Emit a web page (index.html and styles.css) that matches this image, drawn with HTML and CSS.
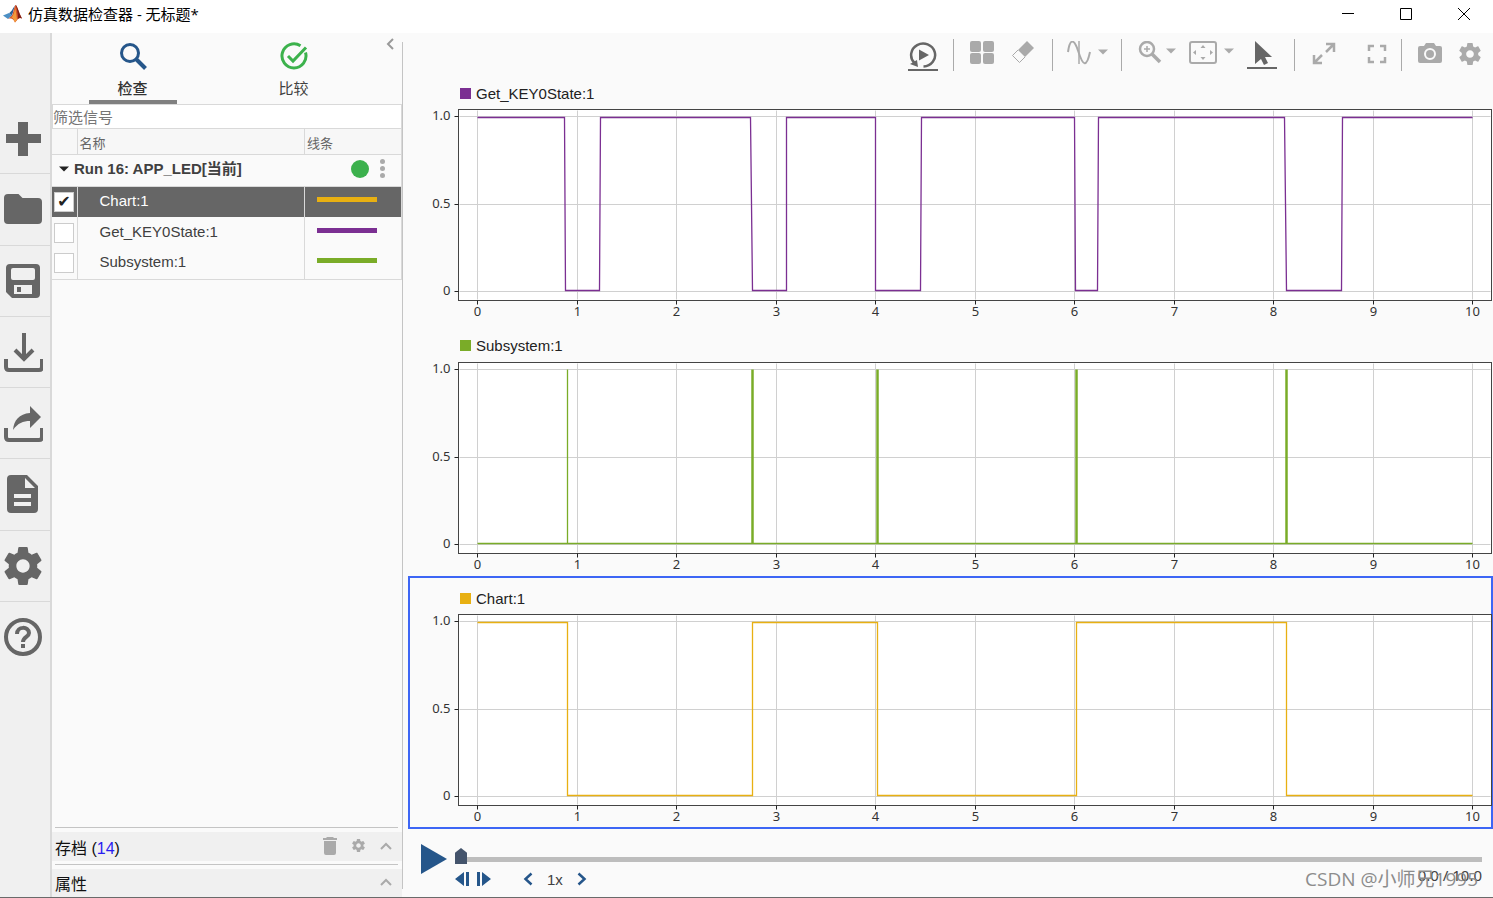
FILE: index.html
```html
<!DOCTYPE html>
<html lang="zh-CN">
<head>
  <meta charset="UTF-8">
  <title>仿真数据检查器 - 无标题*</title>
  <link rel="stylesheet" href="styles.css">
</head>
<body>
  <!-- shared symbols -->
  <svg class="defs" aria-hidden="true">
    <symbol id="i-gear" viewBox="2 2 20 20">
      <path d="M19.43 12.98c.04-.32.07-.64.07-.98s-.03-.66-.07-.98l2.11-1.65c.19-.15.24-.42.12-.64l-2-3.46c-.12-.22-.39-.3-.61-.22l-2.49 1c-.52-.4-1.08-.73-1.69-.98l-.38-2.65C14.46 2.18 14.25 2 14 2h-4c-.25 0-.46.18-.49.42l-.38 2.65c-.61.25-1.17.59-1.69.98l-2.49-1c-.23-.09-.49 0-.61.22l-2 3.46c-.13.22-.07.49.12.64l2.11 1.65c-.04.32-.07.65-.07.98s.03.66.07.98l-2.11 1.65c-.19.15-.24.42-.12.64l2 3.46c.12.22.39.3.61.22l2.49-1c.52.4 1.08.73 1.69.98l.38 2.65c.03.24.24.42.49.42h4c.25 0 .46-.18.49-.42l.38-2.65c.61-.25 1.17-.59 1.69-.98l2.49 1c.23.09.49 0 .61-.22l2-3.46c.12-.22.07-.49-.12-.64l-2.11-1.65zM12 15.5c-1.93 0-3.5-1.57-3.5-3.5s1.57-3.5 3.5-3.5 3.5 1.57 3.5 3.5-1.57 3.5-3.5 3.5z"/>
    </symbol>
    <symbol id="i-caret" viewBox="0 0 10 6"><path d="M0 0.500h10L5 5.500z"/></symbol>
    <symbol id="i-up" viewBox="0 0 12 8"><path d="M1 7l5-5 5 5" fill="none" stroke="#aaa" stroke-width="2"/></symbol>
  </svg>

  <header class="titlebar">
    <svg class="logo" viewBox="0 0 20 18">
      <path d="M0 10.500L6 8l3 2.500L5 14z" fill="#4b8fc4"/>
      <path d="M6 8c2-.5 3.500-4 6-7.500L9 10.500z" fill="#2c5f95"/>
      <path d="M5 14l4-3.500C10.500 8 11 2 12.500 0c1.500 0 3 7 6.500 13.500-3-1.500-4 .5-7 4C11 15 9 12.500 5 14z" fill="#d8532a"/>
      <path d="M12.500 0c1.500 0 3 7 6.500 13.500-2-1-3-.5-4 .5C15 9 14 3 12.500 0z" fill="#7e1f16"/>
      <path d="M8.500 12.500c2 .5 2.500 3 3.500 5 1-1.500 1.500-2 2-3-.5-4-1-8-1.800-12-.6 4-1.700 8-3.700 10z" fill="#f29a3a"/>
    </svg>
    <h1>仿真数据检查器 - 无标题*</h1>
    <div class="window-buttons">
      <button aria-label="最小化"><svg viewBox="0 0 12 12"><path d="M0 5.500h12"/></svg></button>
      <button aria-label="最大化"><svg viewBox="0 0 12 12"><path d="M.5.5h11v11H.5z"/></svg></button>
      <button aria-label="关闭"><svg viewBox="0 0 12 12"><path d="M0 0l12 12M12 0L0 12"/></svg></button>
    </div>
  </header>

  <div class="workspace">
    <nav class="rail">
      <div class="rail-items">
        <button aria-label="新建"><svg viewBox="0 0 40 40"><path d="M15 4h10v12h13v9H25v13H15V25H3v-9h12z"/></svg></button>
        <button aria-label="打开"><svg viewBox="0 0 40 40"><path d="M5 5h10.500l4 4H35a4 4 0 0 1 4 4v18a4 4 0 0 1-4 4H5a4 4 0 0 1-4-4V9a4 4 0 0 1 4-4z"/></svg></button>
        <button aria-label="保存"><svg viewBox="0 0 40 40"><path fill-rule="evenodd" d="M7 3h26a4 4 0 0 1 4 4v26a4 4 0 0 1-4 4H9l-6-6V7a4 4 0 0 1 4-4zM10 7q-2 0-2 2v8q0 2 2 2h20q2 0 2-2V9q0-2-2-2zM11 24v9h18v-9zM14 26h4v5h-4z"/></svg></button>
        <button aria-label="导入"><svg viewBox="0 0 40 40"><path d="M3 27v8q0 3 3 3h30q3 0 3-3v-8M21 1v25M12 18l9 9 9-9" class="line"/></svg></button>
        <button aria-label="导出"><svg viewBox="0 0 40 40"><path d="M3 25v9q0 3 3 3h30q3 0 3-3v-9" class="line"/><path d="M10 27c1-10 6-16 17-17V3l11 11-11 11v-7c-7 0-12 2-17 9z"/></svg></button>
        <button aria-label="报告"><svg viewBox="0 0 40 40"><path fill-rule="evenodd" d="M8 1h16l11 11v23a4 4 0 0 1-4 4H8a4 4 0 0 1-4-4V5a4 4 0 0 1 4-4zM22 4v10h10zM11 20v4h17v-4zM11 28v4h17v-4z"/></svg></button>
        <button aria-label="设置"><svg viewBox="0 0 40 40"><use href="#i-gear" x="1" y="1" width="38" height="38"/></svg></button>
        <button aria-label="帮助"><svg viewBox="0 0 40 40"><circle cx="20" cy="20" r="17" fill="none" stroke="#666" stroke-width="4"/><path d="M14 17c0-8 12-8 12-1 0 4-6 4-6 9" fill="none" stroke="#666" stroke-width="4"/><path d="M18 27h4v4h-4z"/></svg></button>
      </div>
    </nav>

    <aside class="sidebar">
      <div class="tabs">
        <button class="tab active">
          <svg viewBox="0 0 28 28"><circle cx="11" cy="11" r="8.500" fill="none" stroke="#25568a" stroke-width="3"/><path d="M17 17l9.500 9.500" stroke="#25568a" stroke-width="4"/></svg>
          <span>检查</span>
        </button>
        <button class="tab">
          <svg viewBox="0 0 28 28" fill="none" stroke="#3cb24c" stroke-width="3"><path d="M25.500 10.500A12 12 0 1 1 20.500 3.800"/><path d="M8 14l5 5L26 5.500"/></svg>
          <span>比较</span>
        </button>
        <button class="collapse" aria-label="折叠"><svg viewBox="0 0 8 12"><path d="M7 1L2 6l5 5" fill="none" stroke="#999" stroke-width="2"/></svg></button>
      </div>

      <input class="filter" type="text" placeholder="筛选信号" aria-label="筛选信号">

      <table class="signals">
        <thead>
          <tr><th class="col-check"></th><th>名称</th><th class="col-line">线条</th></tr>
        </thead>
        <tbody>
          <tr class="run">
            <td colspan="3">
              <div class="run-row">
                <svg class="expander" viewBox="0 0 10 6"><use href="#i-caret" width="10" height="6"/></svg>
                <span>Run 16: APP_LED[当前]</span>
                <i class="status"></i>
                <button class="more" aria-label="更多"><i></i><i></i><i></i></button>
              </div>
            </td>
          </tr>
          <tr class="selected">
            <td><input type="checkbox" id="sig1" checked></td>
            <td><label for="sig1">Chart:1</label></td>
            <td><i class="line-sample yellow"></i></td>
          </tr>
          <tr>
            <td><input type="checkbox" id="sig2"></td>
            <td><label for="sig2">Get_KEY0State:1</label></td>
            <td><i class="line-sample purple"></i></td>
          </tr>
          <tr>
            <td><input type="checkbox" id="sig3"></td>
            <td><label for="sig3">Subsystem:1</label></td>
            <td><i class="line-sample green"></i></td>
          </tr>
        </tbody>
      </table>

      <div class="drawers">
        <div class="drawer">
          <span class="drawer-title">存档 (<b>14</b>)</span>
          <button aria-label="删除"><svg width="14" height="18" viewBox="0 0 14 18"><path d="M4 0h6l1 1h3v2H0V1h3zM1 4h12v12q0 2-2 2H3q-2 0-2-2z"/></svg></button>
          <button aria-label="存档设置"><svg width="13" height="13"><use href="#i-gear"/></svg></button>
          <button aria-label="展开存档"><svg width="12" height="8"><use href="#i-up"/></svg></button>
        </div>
        <div class="drawer">
          <span class="drawer-title">属性</span>
          <button aria-label="展开属性"><svg width="12" height="8"><use href="#i-up"/></svg></button>
        </div>
      </div>
    </aside>

    <div class="divider"></div>

    <main class="main">
      <div class="toolbar">
        <div class="group replay">
          <button class="on" aria-label="回放"><svg width="30" height="28" viewBox="0 0 30 28"><path d="M15.500 25.500A12 11.500 0 1 0 6.500 22" fill="none" stroke="#666" stroke-width="2.500"/><path d="M11 8.500l10 5.500-10 5.500zM2 23l7-4 1 7z"/></svg></button>
        </div>
        <div class="group layout">
          <button aria-label="布局"><svg width="24" height="24" viewBox="0 0 24 24"><rect width="11" height="11" rx="2" x="0" y="0"/><rect x="13" y="0" width="11" height="11" rx="2"/><rect y="12" width="11" height="11" rx="2"/><rect x="13" y="12" width="11" height="11" rx="2"/></svg></button>
          <button aria-label="清除"><svg width="24" height="24" viewBox="0 0 24 24"><path d="M16 0l7 7-9 9-7-7z"/><path d="M7 9l-5.500 5.500 7 7L14 16" fill="none" stroke="#aaa"/></svg></button>
        </div>
        <div class="group cursors">
          <button class="menu wide" aria-label="游标"><svg width="24" height="26" viewBox="0 0 24 26"><path d="M1 11C3-3 7-3 11.500 11s8 16 11.500 0" fill="none" stroke="#aaa" stroke-width="2"/><path d="M12 0v23" stroke="#aaa" stroke-width="1.500"/></svg><svg class="caret"><use href="#i-caret"/></svg></button>
        </div>
        <div class="group view">
          <button class="menu" aria-label="缩放"><svg width="24" height="24" viewBox="0 0 24 24"><circle cx="9" cy="8" r="7" fill="none" stroke="#aaa" stroke-width="2.500"/><path d="M14 13l8 8" stroke="#aaa" stroke-width="3.500"/><path d="M9 5v6M6 8h6" stroke="#aaa" stroke-width="1.500"/></svg><svg class="caret"><use href="#i-caret"/></svg></button>
          <button class="menu wide" aria-label="适应视图"><svg width="28" height="24" viewBox="0 0 28 24"><rect x="1" y="1" width="26" height="21" rx="2" fill="none" stroke="#aaa" stroke-width="2"/><path d="M14 4l2.500 3h-5zM14 19l2.500-3h-5zM4 11.500l3-2.500v5zM24 11.500L21 9v5z"/></svg><svg class="caret"><use href="#i-caret"/></svg></button>
          <button class="on pointer" aria-label="选择"><svg width="30" height="26" viewBox="0 0 30 26"><path d="M8 0l17 16h-7l3 6-4 2-3-6-6 5z"/></svg></button>
        </div>
        <div class="group loose">
          <button aria-label="展开"><svg width="24" height="24" viewBox="0 0 24 24"><path d="M14 3h8v8M21 4l-7 7M10 22H2v-8M3 21l7-7" fill="none" stroke="#aaa" stroke-width="2.500"/></svg></button>
          <button aria-label="全屏"><svg width="24" height="24" viewBox="0 0 24 24"><path d="M4 10V5h5M15 5h5v5M20 16v5h-5M9 21H4v-5" fill="none" stroke="#aaa" stroke-width="2.500"/></svg></button>
        </div>
        <div class="group">
          <button aria-label="快照"><svg width="24" height="24" viewBox="0 0 24 24"><path fill-rule="evenodd" d="M8 2h8l2 3h4q2 0 2 2v13q0 2-2 2H2q-2 0-2-2V7q0-2 2-2h4zM12 7a6 6 0 1 0 0 12 6 6 0 0 0 0-12z"/><circle cx="12" cy="13" r="4"/></svg></button>
          <button aria-label="首选项"><svg width="24" height="24" viewBox="0 0 24 24"><use href="#i-gear" x="1" y="2" width="22" height="22"/></svg></button>
        </div>
      </div>

      <div class="plots">
        <section class="plot">
          <h2><i class="swatch purple"></i>Get_KEY0State:1</h2>
          <svg class="chart" data-signal="key"></svg>
        </section>
        <section class="plot">
          <h2><i class="swatch green"></i>Subsystem:1</h2>
          <svg class="chart" data-signal="subsystem"></svg>
        </section>
        <section class="plot active">
          <h2><i class="swatch yellow"></i>Chart:1</h2>
          <svg class="chart" data-signal="chart"></svg>
        </section>
      </div>

      <footer class="player">
        <button class="play" aria-label="播放"><svg width="26" height="30" viewBox="0 0 26 30"><path d="M0 0l26 15L0 30z"/></svg></button>
        <div class="player-body">
          <input type="range" min="0" max="10" step="0.1" value="0" aria-label="时间">
          <div class="player-row">
            <button aria-label="后退一步"><svg width="14" height="16" viewBox="0 0 14 16"><path d="M0 8l9-7v14zM11 1h3v14h-3z"/></svg></button>
            <button aria-label="前进一步"><svg width="14" height="16" viewBox="0 0 14 16"><path d="M14 8L5 1v14zM0 1h3v14H0z"/></svg></button>
            <div class="speed">
              <button aria-label="减速"><svg width="10" height="14" viewBox="0 0 10 14"><path d="M8.500 1.500L2.500 7l6 5.500" class="chev"/></svg></button>
              <span>1x</span>
              <button aria-label="加速"><svg width="10" height="14" viewBox="0 0 10 14"><path d="M1.500 1.500L7.500 7l-6 5.500" class="chev"/></svg></button>
            </div>
            <span class="time">0.0 / 10.0</span>
          </div>
        </div>
      </footer>
    </main>
  </div>

  <div class="watermark">CSDN @小师兄1995</div>

  <script src="charts.js"></script>
</body>
</html>
```
FILE: styles.css
```css
* {
  box-sizing: border-box;
}

body {
  margin: 0;
  height: 100vh;
  display: flex;
  flex-direction: column;
  overflow: hidden;
  position: relative;
  background: #fafafa;
  border-bottom: 1px solid #6a6a6a;
  font-family: "Liberation Sans", "Noto Sans CJK SC", sans-serif;
  font-size: 15px;
  color: #404040;
}

button {
  display: flex;
  align-items: center;
  justify-content: center;
  padding: 0;
  border: none;
  background: none;
  color: inherit;
  font: inherit;
  cursor: pointer;
}

svg {
  display: block;
}

.defs {
  position: absolute;
  width: 0;
  height: 0;
}

.purple { background: #7b2f92; }
.green { background: #7aac28; }
.yellow { background: #e8b012; }

/* title bar */
.titlebar {
  display: flex;
  align-items: center;
  height: 33px;
  padding: 0 6px 6px 3px;
  background: #fff;
}

.logo {
  width: 20px;
  height: 18px;
}

.titlebar h1 {
  flex: 1;
  margin: 0 0 0 5px;
  font-family: "Open Sans", "Noto Sans CJK SC", sans-serif;
  font-size: 15px;
  font-weight: normal;
  line-height: 20px;
  color: #000;
}

.window-buttons {
  display: flex;
}

.window-buttons button {
  width: 46px;
  height: 28px;
  margin-left: 12px;
}

.window-buttons svg {
  width: 12px;
  height: 12px;
  fill: none;
  stroke: #000;
}

.workspace {
  flex: 1;
  display: flex;
  min-height: 0;
}

/* left icon rail */
.rail {
  flex: none;
  width: 52px;
  padding-top: 70px;
  background: #f0f0f0;
  border-right: 2px solid #d9d9d9;
}

.rail-items {
  display: grid;
  grid-template-rows: repeat(8, 1fr);
  height: 570px;
}

.rail button {
  padding-right: 5px;
  border-bottom: 1px solid #d9d9d9;
}

.rail button:last-child {
  border-bottom: none;
}

.rail svg {
  width: 40px;
  height: 40px;
  fill: #666;
}

.rail .line {
  fill: none;
  stroke: #666;
  stroke-width: 4;
}

/* sidebar */
.sidebar {
  flex: none;
  width: 350px;
  display: flex;
  flex-direction: column;
}

.tabs {
  display: flex;
  height: 71px;
}

.tab {
  flex: 1;
  flex-direction: column;
  justify-content: flex-start;
  padding-top: 9px;
}

.tab svg {
  width: 28px;
  height: 28px;
}

.tab span {
  width: 88px;
  height: 28px;
  margin-top: 6px;
  line-height: 25px;
}

.tab.active span {
  border-bottom: 4px solid #808080;
  font-weight: 500;
  color: #333;
}

.collapse {
  width: 28px;
  height: 22px;
  padding-left: 4px;
}

.collapse svg {
  width: 8px;
  height: 12px;
}

.filter {
  height: 25px;
  padding: 1px 0 0;
  border: 1px solid #d9d9d9;
  background: #fff;
  font: inherit;
}

.filter::placeholder {
  color: #757575;
}

.signals {
  width: 100%;
  table-layout: fixed;
  border-collapse: collapse;
  border-right: 1px solid #d9d9d9;
  border-bottom: 1px solid #d9d9d9;
}

.signals th {
  height: 25px;
  padding: 2px 2px 0;
  border-right: 1px solid #d9d9d9;
  border-bottom: 1px solid #d9d9d9;
  background: #f7f7f7;
  text-align: left;
  font-size: 13px;
  font-weight: normal;
  color: #666;
}

.col-check { width: 25px; }
.col-line { width: 97px; }

.signals td {
  height: 31px;
  padding: 0;
  border-right: 1px solid #d9d9d9;
}

.signals .run td {
  border-bottom: 1px solid #d9d9d9;
}

.run-row {
  display: flex;
  align-items: center;
  height: 31px;
  padding: 0 16px 3px 7px;
  font-weight: bold;
}

.run-row span {
  flex: 1;
  padding-bottom: 3px;
}

.expander {
  width: 10px;
  height: 6px;
  margin-right: 5px;
  fill: #222;
}

.status {
  width: 18px;
  height: 18px;
  border-radius: 50%;
  background: #3cb14d;
}

.more {
  flex-direction: column;
  gap: 2px;
  margin-left: 11px;
}

.more i {
  width: 5px;
  height: 5px;
  border-radius: 50%;
  background: #aaa;
}

.signals input {
  display: block;
  appearance: none;
  width: 20px;
  height: 20px;
  margin: 0 2px;
  border: 1px solid #ccc;
  background: #fff;
}

.signals input:checked::before {
  content: "✔";
  display: block;
  line-height: 18px;
  text-align: center;
  font-family: "DejaVu Sans", sans-serif;
  font-size: 16px;
  color: #222;
}

.signals label {
  display: block;
  padding: 0 0 3px 22px;
}

.selected {
  background: #666;
  color: #fff;
  font-weight: 500;
}

.line-sample {
  display: block;
  width: 60px;
  height: 5px;
  margin: 0 0 5px 12px;
}

.drawers {
  margin-top: auto;
}

.drawer {
  display: flex;
  align-items: center;
  height: 29px;
  padding: 0 10px 0 3px;
  background: #f0f0f0;
  font-size: 16px;
  color: #111;
  position: relative;
  margin-top: 8px;
}

.drawer:last-child {
  height: 28px;
}

.drawer::before {
  content: "";
  position: absolute;
  top: -5px;
  left: 3px;
  right: 4px;
  border-top: 1px solid #c4c4c4;
}

.drawer-title {
  flex: 1;
}

.drawer b {
  font-weight: normal;
  color: #2a1cf0;
}

.drawer button {
  margin-left: 15px;
  padding-bottom: 2px;
}

.drawer svg {
  fill: #aaa;
}

.divider {
  flex: none;
  width: 1px;
  margin: 9px 0 8px;
  background: #c4c4c4;
}

/* toolbar */
.main {
  flex: 1;
  min-width: 0;
  display: flex;
  flex-direction: column;
}

.toolbar {
  display: flex;
  justify-content: flex-end;
  height: 38px;
  padding: 6px 11px 0 0;
}

.group {
  display: flex;
  align-items: flex-start;
  gap: 16px;
  height: 32px;
  padding: 0 16px;
  border-left: 1px solid #aaa;
}

.group:last-child {
  padding-right: 0;
}

.group.replay {
  border-left: none;
  padding-right: 15px;
}

.group.layout {
  gap: 17px;
  padding-right: 17px;
}

.group.cursors {
  padding: 0 13px 0 14px;
}

.group.view {
  gap: 13px;
  padding-right: 17px;
}

.group.loose {
  gap: 29px;
  padding: 0 12px 0 17px;
}

.group svg {
  fill: #aaa;
}

.group button {
  padding-top: 2px;
}

.group .menu {
  gap: 4px;
}

.group .menu.wide {
  gap: 7px;
}

.group .caret {
  width: 10px;
  height: 6px;
  margin-bottom: 4px;
}

.group .on {
  border-bottom: 2px solid #666;
}

.group .on svg {
  fill: #666;
}

/* plots */
.plots {
  flex: 1;
  min-height: 0;
  display: flex;
  flex-direction: column;
  margin-left: 5px;
}

.plot {
  flex: 1;
  min-height: 0;
  display: flex;
  flex-direction: column;
  border: 2px solid transparent;
}

.plot.active {
  border-color: #3d66f5;
}

.plot h2 {
  display: flex;
  align-items: center;
  height: 36px;
  margin: 0;
  padding: 4px 0 0 50px;
  font-size: 15px;
  font-weight: normal;
  color: #222;
}

.swatch {
  width: 11px;
  height: 11px;
  margin-right: 5px;
}

.chart {
  flex: 1;
  min-height: 0;
  width: 100%;
  overflow: visible;
}

.chart text {
  font-family: "Noto Sans", sans-serif;
  font-size: 13px;
  fill: #333;
}

.chart .area { fill: #fff; stroke: #444; }
.chart .grid { stroke: #d0d0d0; }
.chart .tick { stroke: #222; }
.chart .trace { fill: none; }

/* playback */
.player {
  display: flex;
  gap: 8px;
  height: 68px;
  padding: 15px 11px 0 18px;
}

.play {
  align-self: flex-start;
}

.player svg {
  fill: #25568a;
}

.player-body {
  flex: 1;
  padding-top: 4px;
}

.player input {
  display: block;
  appearance: none;
  width: 100%;
  height: 23px;
  margin: 0;
  background: none;
}

.player input::-webkit-slider-runnable-track {
  height: 5px;
  background: linear-gradient(to right, transparent 6px, #bdbdbd 6px);
}

.player input::-webkit-slider-thumb {
  appearance: none;
  width: 12px;
  height: 16px;
  margin-top: -9px;
  background: #44546c;
  clip-path: polygon(50% 0, 100% 30%, 100% 100%, 0 100%, 0 30%);
}

.player-row {
  display: flex;
  align-items: center;
  gap: 8px;
  height: 16px;
}

.speed {
  display: flex;
  align-items: center;
  gap: 14px;
  margin-left: 24px;
}

.chev {
  fill: none;
  stroke: #25568a;
  stroke-width: 2.5;
}

.time {
  margin-left: auto;
  padding-bottom: 8px;
  font-family: "Noto Sans", sans-serif;
  font-size: 15px;
}

.watermark {
  position: absolute;
  right: 15px;
  bottom: 5px;
  font-family: "Open Sans", "Noto Sans CJK SC", sans-serif;
  font-size: 19px;
  line-height: 26px;
  color: #8c8c8c;
  pointer-events: none;
}
```
FILE: charts.js
```js
const signals = {
  key: {
    color: '#7b2f92',
    points: [[0, 1], [0.87, 1], [0.885, 0], [1.225, 0], [1.24, 1], [2.74, 1], [2.76, 0], [3.105, 0], [3.11, 1],
      [3.995, 1], [4.005, 0], [4.45, 0], [4.46, 1], [6, 1], [6.01, 0], [6.235, 0], [6.245, 1],
      [8.11, 1], [8.135, 0], [8.68, 0], [8.69, 1], [10, 1]]
  },
  subsystem: {
    color: '#7aac28',
    pulses: [[0.9, 1.3], [2.765, 2.5], [4.025, 2.5], [6.025, 2.5], [8.135, 2.5]]
  },
  chart: {
    color: '#e8b012',
    points: [[0, 1], [0.9, 1], [0.9, 0], [2.76, 0], [2.76, 1], [4.02, 1], [4.02, 0],
      [6.02, 0], [6.02, 1], [8.13, 1], [8.13, 0], [10, 0]]
  }
};

function drawChart(svg) {
  const signal = signals[svg.dataset.signal];
  const width = svg.clientWidth;
  const height = svg.clientHeight;
  const left = 48.5;
  // the plot area runs up to the panel's border
  const right = width + 0.5;
  const top = 0.5;
  const bottom = Math.floor(height) - 21.5;
  const snap = v => Math.floor(v) + 0.5;
  const x = t => left + 19 + t / 10 * (right - left - 38);
  const y = v => bottom - 9 - v * (bottom - top - 16);
  // traces sit just inside the outer grid lines
  const ty = v => snap(v ? y(1) + 1 : y(0) - 1);

  let html = `<rect class="area" x="${left}" y="${top}" width="${right - left}" height="${bottom - top}"/>`;

  for (let t = 0; t <= 10; t++) {
    const px = snap(x(t));
    html += `<path class="grid" d="M${px} ${top + 1}V${bottom - 1}"/>`;
    html += `<path class="tick" d="M${px} ${bottom}v4"/>`;
    html += `<text x="${px}" y="${bottom + 15}" text-anchor="middle">${t}</text>`;
  }

  [[0, '0'], [0.5, '0.5'], [1, '1.0']].forEach(([v, label]) => {
    const py = snap(y(v));
    html += `<path class="grid" d="M${left + 1} ${py}H${right - 1}"/>`;
    html += `<path class="tick" d="M${left - 4} ${py}h4"/>`;
    html += `<text x="${left - 8}" y="${py + 3}" text-anchor="end">${label}</text>`;
  });

  if (signal.points) {
    const d = signal.points.map(([t, v]) => `${snap(x(t))} ${ty(v)}`).join('L');
    html += `<path class="trace" stroke="${signal.color}" stroke-width="1.3" d="M${d}"/>`;
  } else {
    html += `<path class="trace" stroke="${signal.color}" stroke-width="1.5" d="M${x(0)} ${ty(0)}H${x(10)}"/>`;
    signal.pulses.forEach(([t, w]) => {
      html += `<path class="trace" stroke="${signal.color}" stroke-width="${w}" d="M${snap(x(t))} ${y(1)}V${ty(0)}"/>`;
    });
  }

  svg.innerHTML = html;
}

function drawAll() {
  document.querySelectorAll('.chart').forEach(drawChart);
}

window.addEventListener('resize', drawAll);
drawAll();
```
